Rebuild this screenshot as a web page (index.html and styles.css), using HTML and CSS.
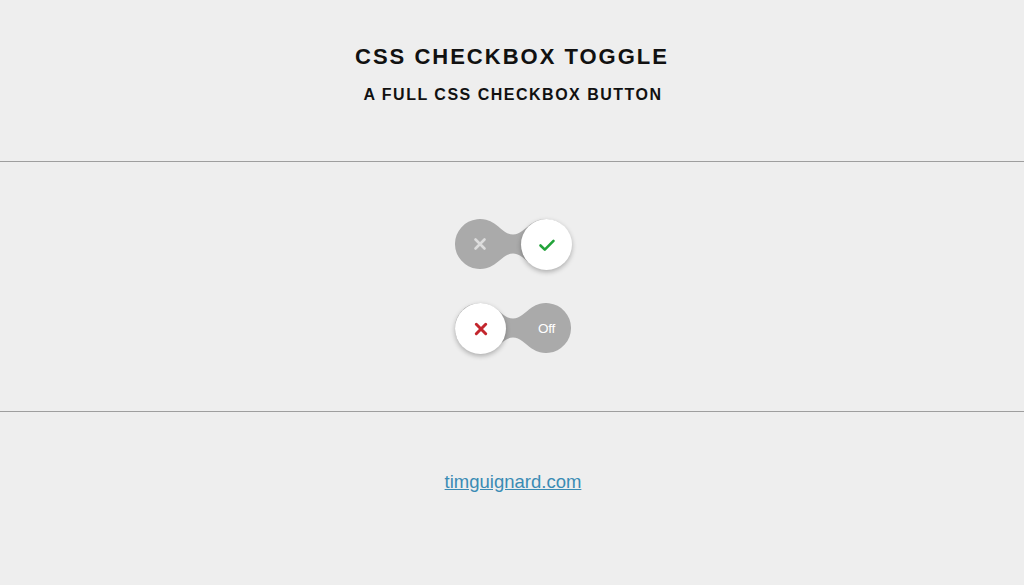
FILE: index.html
```html
<!DOCTYPE html>
<html lang="en">
<head>
<meta charset="utf-8">
<title>CSS Checkbox Toggle</title>
<link rel="stylesheet" href="styles.css">
</head>
<body>
  <header class="intro">
    <h1 class="title">CSS Checkbox Toggle</h1>
    <h2 class="subtitle">A full CSS checkbox button</h2>
  </header>
  <main class="demo">
    <label class="toggle is-on">
      <input type="checkbox" class="toggle-input" checked>
      <svg class="toggle-track" width="116" height="50" viewBox="0 0 116 50" aria-hidden="true">
        <path d="M39.3 4.5 C45.9 9.1 51 15.5 58 15.5 C65 15.5 70.1 9.1 76.7 4.5 A25 25 0 1 1 76.7 45.5 C70.1 40.9 65 34.5 58 34.5 C51 34.5 45.9 40.9 39.3 45.5 A25 25 0 1 1 39.3 4.5 Z" fill="#aaaaaa"/>
        <path d="M20.5 20.5 L29.5 29.5 M29.5 20.5 L20.5 29.5" stroke="#dcdcdc" stroke-width="2.6" stroke-linecap="round"/>
      </svg>
      <span class="knob knob-right">
        <svg width="20" height="20" viewBox="0 0 20 20" aria-hidden="true">
          <path d="M3.5 10.5 L7.8 14.6 L16.5 5.8" fill="none" stroke="#22a33a" stroke-width="2.6" stroke-linecap="round" stroke-linejoin="round"/>
        </svg>
      </span>
    </label>
    <label class="toggle is-off">
      <input type="checkbox" class="toggle-input">
      <svg class="toggle-track" width="116" height="50" viewBox="0 0 116 50" aria-hidden="true">
        <path d="M39.3 4.5 C45.9 9.1 51 15.5 58 15.5 C65 15.5 70.1 9.1 76.7 4.5 A25 25 0 1 1 76.7 45.5 C70.1 40.9 65 34.5 58 34.5 C51 34.5 45.9 40.9 39.3 45.5 A25 25 0 1 1 39.3 4.5 Z" fill="#aaaaaa"/>
      </svg>
      <span class="off-label">Off</span>
      <span class="knob knob-left">
        <svg width="20" height="20" viewBox="0 0 20 20" aria-hidden="true">
          <path d="M5.3 5.3 L14.7 14.7 M14.7 5.3 L5.3 14.7" stroke="#c3262d" stroke-width="3" stroke-linecap="round"/>
        </svg>
      </span>
    </label>
  </main>
  <footer class="credits">
    <a class="credit-link" href="#">timguignard.com</a>
  </footer>
</body>
</html>
```
FILE: styles.css
```css
* { box-sizing: border-box; }

html, body {
  margin: 0;
  padding: 0;
  background: #eeeeee;
  font-family: "Liberation Sans", Arial, sans-serif;
  color: #111;
}

.intro {
  height: 162px;
  padding-top: 44px;
  border-bottom: 1px solid #9e9e9e;
  text-align: center;
}

.title {
  margin: 0;
  font-size: 22px;
  line-height: 26px;
  font-weight: bold;
  letter-spacing: 2px;
  text-transform: uppercase;
  color: #111;
}

.subtitle {
  margin: 16px 0 0 2px;
  font-size: 16px;
  line-height: 18px;
  font-weight: bold;
  letter-spacing: 1.5px;
  text-transform: uppercase;
  color: #111;
}

.demo {
  height: 250px;
  padding-top: 57px;
  border-bottom: 1px solid #9e9e9e;
  display: flex;
  flex-direction: column;
  align-items: center;
  gap: 34px;
}

.toggle {
  position: relative;
  display: block;
  width: 116px;
  height: 50px;
  margin-left: 2px;
  cursor: pointer;
}

.toggle-input {
  position: absolute;
  opacity: 0;
  width: 0;
  height: 0;
  margin: 0;
}

.toggle-track {
  display: block;
}

.knob {
  position: absolute;
  top: 0;
  width: 51px;
  height: 51px;
  border-radius: 50%;
  background: #ffffff;
  box-shadow: 0 2px 5px rgba(0, 0, 0, 0.28);
  display: flex;
  align-items: center;
  justify-content: center;
}

.knob-right { left: 66px; }
.knob-left { left: 0; }

.knob svg { display: block; }

.off-label {
  position: absolute;
  left: 83px;
  top: 18px;
  font-size: 13.5px;
  line-height: 16px;
  color: #ffffff;
  letter-spacing: -0.3px;
}

.credits {
  padding-top: 59px;
  padding-left: 2px;
  text-align: center;
}

.credit-link {
  font-size: 18.5px;
  line-height: 21px;
  color: #3a8bb4;
  text-decoration: underline;
}
```
